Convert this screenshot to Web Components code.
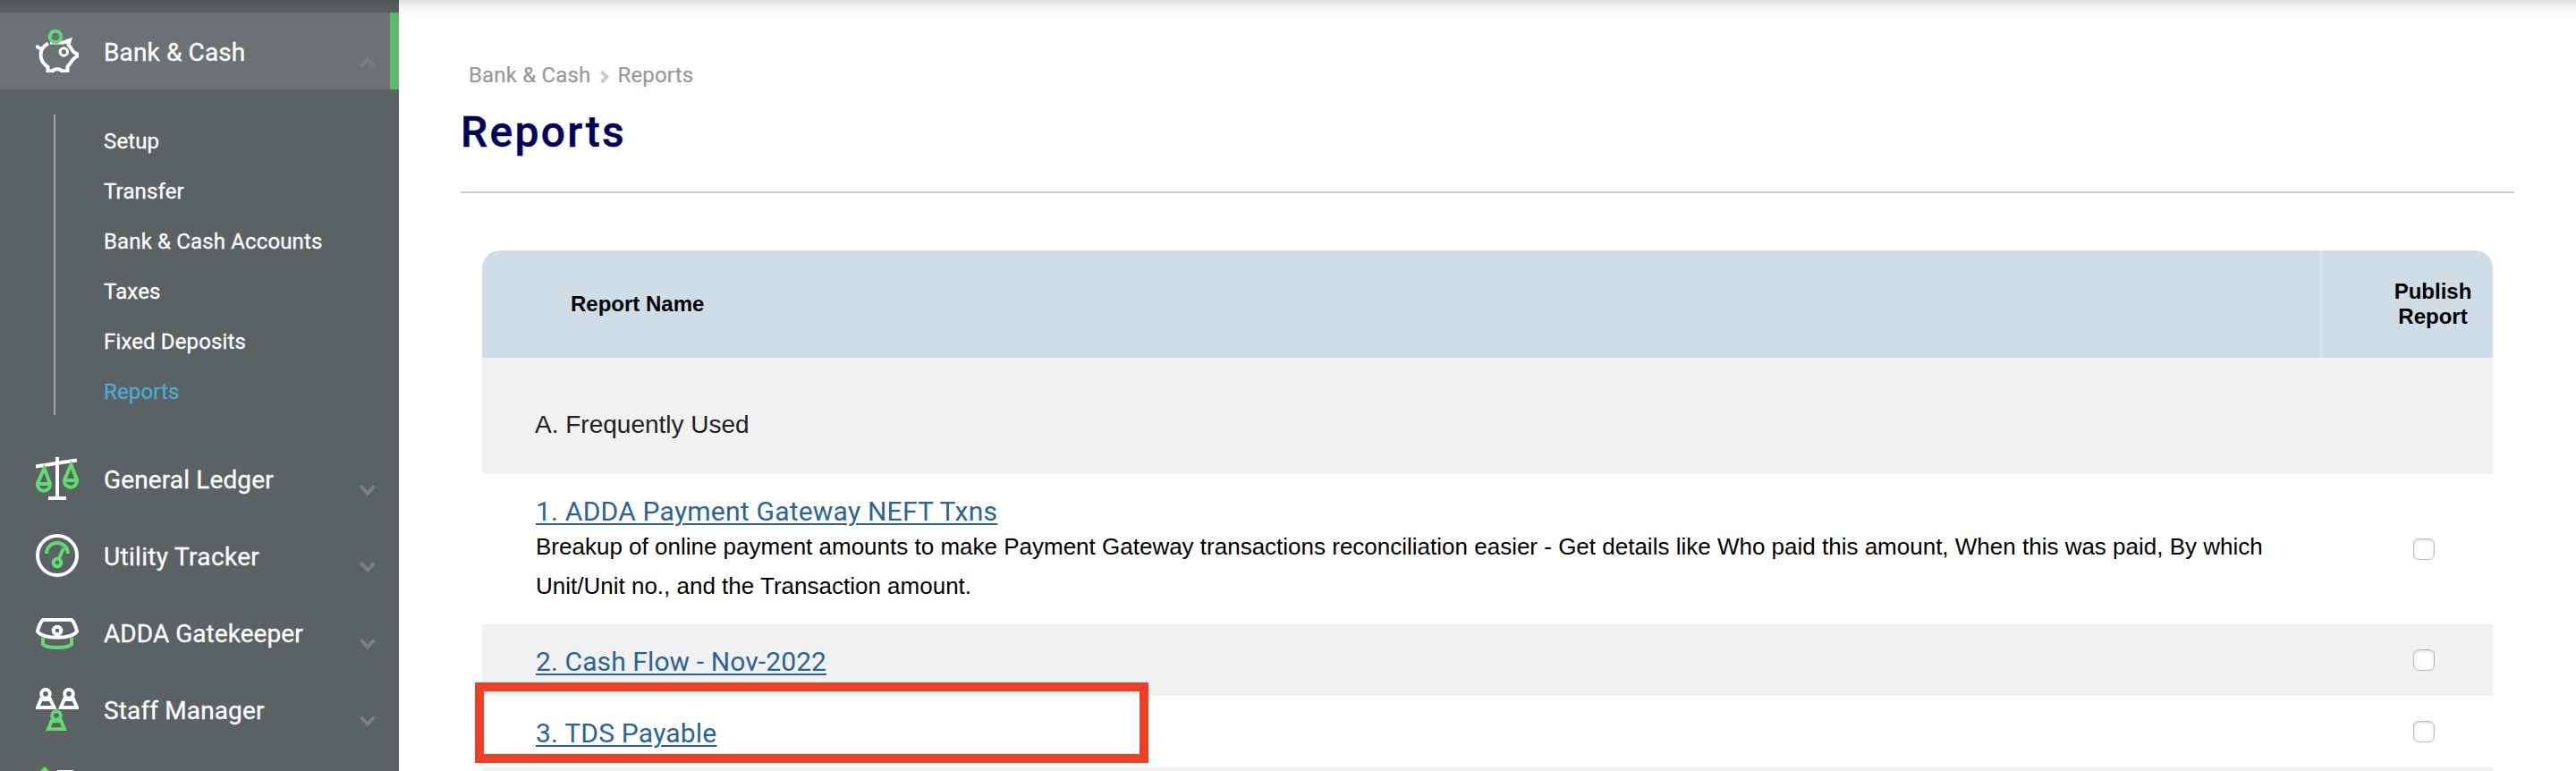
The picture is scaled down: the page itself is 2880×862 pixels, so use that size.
<!DOCTYPE html>
<html lang="en">
<head>
<meta charset="utf-8">
<title>Reports</title>
<style>
    html, body {
        margin: 0;
        height: 862px;
        overflow: hidden;
        background: #fff;
        --main-font: Roboto, "Liberation Sans", sans-serif;
        --table-font: "Liberation Sans", Arial, sans-serif;
    }
</style>
</head>
<body>
<app-shell>
    <side-nav slot="nav">
        <nav-item icon="bank" active>Bank &amp; Cash</nav-item>
        <sub-nav>
            <a>Setup</a>
            <a>Transfer</a>
            <a>Bank &amp; Cash Accounts</a>
            <a>Taxes</a>
            <a>Fixed Deposits</a>
            <a class="current">Reports</a>
        </sub-nav>
        <nav-item icon="ledger">General Ledger</nav-item>
        <nav-item icon="utility" style="--nav-spacing:.32px">Utility Tracker</nav-item>
        <nav-item icon="gate" style="--nav-spacing:.05px">ADDA Gatekeeper</nav-item>
        <nav-item icon="staff">Staff Manager</nav-item>
        <nav-item icon="more"></nav-item>
    </side-nav>
    <page-header>
        <span slot="parent">Bank &amp; Cash</span>
        <span slot="here">Reports</span>
        <span slot="title">Reports</span>
    </page-header>
    <report-table>
        <span slot="name">Report Name</span>
        <span slot="publish">Publish<br>Report</span>
        <report-group>A. Frequently Used</report-group>
        <report-row style="--row-height:168px;--link-spacing:.22px">1. ADDA Payment Gateway NEFT Txns
            <span slot="info">Breakup of online payment amounts to make Payment Gateway transactions reconciliation easier - Get details like Who paid this amount, When this was paid, By which Unit/Unit no., and the Transaction amount.</span>
        </report-row>
        <report-row shaded style="--link-spacing:.1px">2. Cash Flow - Nov-2022</report-row>
        <report-row marked style="--link-spacing:.2px">3. TDS Payable</report-row>
        <report-row shaded blank></report-row>
    </report-table>
</app-shell>

<script>
const icons = {
    bank: `<g stroke="#fff"><path d="M2 17.5v2l5 2.5M14 15.5C8 18.500 5.500 23 5.500 28.500c0 6 3 10 8 13.500v4.500H19c1-3 9-3 10 0h6.500v-5c4-4 5-9 10.500-11.500v-3l-3.500-1.500L36.500 17l1.500-5-7 2.500H16"/><circle cx="31.300" cy="25" r="4.200" stroke-width="3"/></g><circle cx="22" cy="8" r="6.300" stroke="#62da70"/>`,
    ledger: `<path stroke="#fff" d="M0 10.500 46 3.500M24 0v46M14 46h20"/><g stroke="#62da70" stroke-width="4"><path d="M9.500 12.500 2 29.500c-1 11 15 11 14 0zM1.500 30h15M39.500 8.500 32 25.500c-1 11 15 11 14 0zM31.500 26h15"/></g>`,
    utility: `<circle cx="24" cy="24" r="22" stroke="#fff"/><g stroke="#62da70"><path d="M12 22c1-16 23-16 24 0M25.500 28 31 16"/><circle cx="24" cy="32" r="4.300"/></g>`,
    gate: `<path stroke="#62da70" d="M8 30v7.500c5 4.500 27 4.500 32 0V30"/><g stroke="#fff"><path d="M8 10h32c3 3 5 8 6 13-6 9-38 9-44 0 1-5 3-10 6-13z"/><circle cx="24" cy="22" r="4.300"/></g>`,
    staff: `<g stroke="#fff"><circle cx="11" cy="6.700" r="4.800"/><path d="M6 12.500 2 22h18.500L16 12.500zM6 13h10"/><circle cx="37" cy="6.700" r="4.800"/><path d="M32 12.500 28 22h18L42 12.500zM32 13h10"/></g><g stroke="#62da70"><circle cx="23" cy="31" r="4.800"/><path d="M18 36.500 14 46.200h18L28 36.500zM18 37h10"/></g>`,
    more: `<path fill="#62da70" d="M10 2 18 10H2z"/><path stroke="#fff" d="M24 8h18"/>`
};

class AppShell extends HTMLElement {
    constructor() {
        super();
        this.attachShadow({mode:"open"}).innerHTML = `
            <style>
            :host {
                display: grid;
                grid-template-columns: 446px 1fr;
                height: 862px;
                overflow: hidden;
                position: relative;
                font-family: var(--main-font);
            }
            main {
                padding: 0 69px 0 69px;
                min-width: 0;
            }
            .shade {
                position: absolute;
                top: 0;
                left: 0;
                right: 0;
                height: 24px;
                background: linear-gradient(rgba(0,0,0,.12), rgba(0,0,0,.045) 35%, rgba(0,0,0,.012) 70%, rgba(0,0,0,0));
            }
            </style>
            <slot name="nav"></slot>
            <main><slot></slot></main>
            <div class="shade"></div>
        `;
    }
}

class SideNav extends HTMLElement {
    constructor() {
        super();
        this.attachShadow({mode:"open"}).innerHTML = `
            <style>
            :host {
                display: block;
                height: 848px;
                padding-top: 14px;
                background: #5b6264;
                overflow: hidden;
            }
            </style>
            <slot></slot>
        `;
    }
}

class NavItem extends HTMLElement {
    constructor() {
        super();
        this.attachShadow({mode:"open"});
    }

    connectedCallback() {
        const icon = this.getAttribute("icon");
        const points = this.hasAttribute("active") ? "1.500 10.500 9 2.500 16.500 10.500" : "1.500 1.500 9 9.500 16.500 1.500";
        this.shadowRoot.innerHTML = `
            <style>
            :host {
                display: flex;
                align-items: center;
                box-sizing: border-box;
                height: 86px;
                padding: 0 26px 0 40px;
                color: #fff;
                font-size: 28px;
                line-height: 32px;
            }
            :host([active]) {
                background: #6c7173;
                border-right: 10px solid #5dba6a;
                padding-right: 16px;
            }
            .icon {
                width: 48px;
                height: 48px;
                margin-right: 28px;
                fill: none;
                stroke-width: 4;
            }
            .label {
                flex: 1;
                padding-top: 4px;
                white-space: nowrap;
                letter-spacing: var(--nav-spacing, .13px);
                -webkit-text-stroke: .3px;
            }
            .arrow {
                width: 18px;
                height: 12px;
                margin-top: 26px;
                fill: none;
                stroke: #7a7f81;
                stroke-width: 4;
            }
            </style>
            <svg class="icon" viewBox="0 0 48 48">${icons[icon]}</svg>
            <span class="label"><slot></slot></span>
            <svg class="arrow" viewBox="0 0 18 12"><polyline points="${points}"/></svg>
        `;
    }
}

class SubNav extends HTMLElement {
    constructor() {
        super();
        this.attachShadow({mode:"open"}).innerHTML = `
            <style>
            :host {
                display: block;
                padding: 28px 0 28px 60px;
            }
            .list {
                display: flex;
                flex-direction: column;
                border-left: 2px solid #a3a5a5;
                padding-left: 54px;
            }
            ::slotted(a) {
                height: 56px;
                line-height: 60px;
                font-size: 24px;
                letter-spacing: .14px;
                -webkit-text-stroke: .3px;
                color: #fff;
            }
            ::slotted(a.current) {
                color: #4babd3;
            }
            </style>
            <div class="list"><slot></slot></div>
        `;
    }
}

class PageHeader extends HTMLElement {
    constructor() {
        super();
        this.attachShadow({mode:"open"}).innerHTML = `
            <style>
            :host {
                display: block;
                height: 214px;
                border-bottom: 2px solid #ccc;
            }
            .crumbs {
                display: flex;
                align-items: center;
                padding: 69px 0 0 9px;
                font-size: 24px;
                line-height: 30px;
                letter-spacing: .17px;
                -webkit-text-stroke: .2px;
                color: #999;
            }
            svg {
                width: 10px;
                height: 14px;
                margin: 4px 9px 0 11px;
                fill: none;
                stroke: #ccc;
                stroke-width: 4;
            }
            h1 {
                margin: 21px 0 0;
                font-size: 48px;
                line-height: 56px;
                font-weight: 500;
                letter-spacing: 2.3px;
                -webkit-text-stroke: .4px;
                color: #00005a;
            }
            </style>
            <div class="crumbs">
                <slot name="parent"></slot>
                <svg viewBox="0 0 10 14"><path d="M1.500 1 7.500 7 1.500 13"/></svg>
                <slot name="here"></slot>
            </div>
            <h1><slot name="title"></slot></h1>
        `;
    }
}

class ReportTable extends HTMLElement {
    constructor() {
        super();
        this.attachShadow({mode:"open"}).innerHTML = `
            <style>
            :host {
                display: block;
                margin: 64px 24px 0;
                font-family: var(--table-font);
            }
            .head {
                display: grid;
                grid-template-columns: 1fr 191px;
                height: 120px;
                border-radius: 20px 20px 0 0;
                background: #d0dde6;
                overflow: hidden;
                font-size: 24px;
                line-height: 28px;
                font-weight: bold;
                color: #000;
            }
            .name {
                display: flex;
                align-items: center;
                padding-left: 99px;
                border-right: 2px solid #dce5ee;
            }
            .publish {
                padding: 32px 0 0 57px;
                text-align: center;
            }
            </style>
            <div class="head">
                <div class="name"><slot name="name"></slot></div>
                <div class="publish"><slot name="publish"></slot></div>
            </div>
            <slot></slot>
        `;
    }
}

class ReportGroup extends HTMLElement {
    constructor() {
        super();
        this.attachShadow({mode:"open"}).innerHTML = `
            <style>
            :host {
                display: block;
                box-sizing: border-box;
                height: 130px;
                padding: 58px 0 0 59px;
                background: #f1f1f1;
                font-size: 28px;
                line-height: 33px;
                color: #222;
            }
            </style>
            <slot></slot>
        `;
    }
}

class ReportRow extends HTMLElement {
    constructor() {
        super();
        this.attachShadow({mode:"open"});
    }

    connectedCallback() {
        if (this.hasAttribute("blank")) {
            this.shadowRoot.innerHTML = `<style>:host { display: block; height: 80px; background: #f1f1f1; }</style>`;
            return;
        }
        this.shadowRoot.innerHTML = `
            <style>
            :host {
                display: grid;
                grid-template-columns: 1fr 191px;
                height: var(--row-height, 80px);
                position: relative;
                background: #fff;
            }
            :host([shaded]) {
                background: #f1f1f1;
            }
            .text {
                padding: 24px 65px 0 60px;
            }
            a {
                display: block;
                font-family: var(--main-font);
                font-size: 30px;
                line-height: 36px;
                letter-spacing: var(--link-spacing, 0);
                color: #2a6496;
                text-decoration: underline;
                text-decoration-thickness: 2px;
                text-underline-offset: 3px;
            }
            .info {
                display: block;
                margin-top: -1px;
                font-size: 26px;
                line-height: 44px;
                color: #000;
            }
            .check {
                display: flex;
                align-items: center;
                padding-left: 102px;
            }
            input {
                appearance: none;
                box-sizing: border-box;
                width: 24px;
                height: 24px;
                margin: 0;
                border: 1px solid #bcbcbc;
                border-radius: 6px;
                background: #fff;
                box-shadow: inset 0 1px 3px rgba(0,0,0,.18);
            }
            /* red frame drawn around the highlighted report */
            .mark {
                display: none;
            }
            :host([marked]) .mark {
                display: block;
                position: absolute;
                left: -8px;
                top: -15px;
                box-sizing: border-box;
                width: 753px;
                height: 90px;
                border: 10px solid #ed4026;
            }
            </style>
            <div class="text">
                <a><slot></slot></a>
                <span class="info"><slot name="info"></slot></span>
            </div>
            <div class="check"><input type="checkbox"></div>
            <div class="mark"></div>
        `;
    }
}

customElements.define("app-shell", AppShell);
customElements.define("side-nav", SideNav);
customElements.define("nav-item", NavItem);
customElements.define("sub-nav", SubNav);
customElements.define("page-header", PageHeader);
customElements.define("report-table", ReportTable);
customElements.define("report-group", ReportGroup);
customElements.define("report-row", ReportRow);
</script>
</body>
</html>
